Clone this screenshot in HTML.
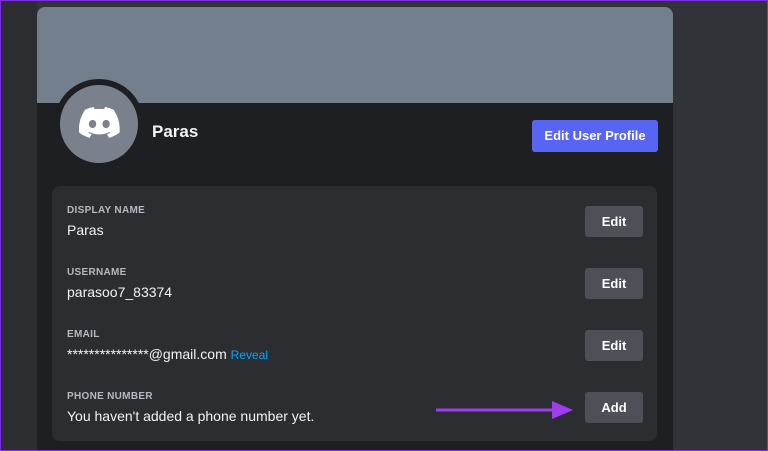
<!DOCTYPE html>
<html><head><style>
html,body{margin:0;width:768px;height:451px;overflow:hidden}
body{background:#313338;font-family:"Liberation Sans",sans-serif;position:relative}
.frame{position:absolute;left:0;top:0;width:766px;height:449px;border:1px solid #7b2fe0;}
.left{position:absolute;left:1px;top:1px;width:36px;height:449px;background:#2b2d31}
.card{position:absolute;left:37px;top:7px;width:636px;height:450px;background:#1e1f22;border-radius:8px 8px 0 0;overflow:hidden}
.banner{height:96px;background:#747f8d}
.avatar{position:absolute;left:17px;top:72px;width:78px;height:78px;border-radius:50%;background:#7a818c;border:6px solid #1e1f22}
.name{position:absolute;left:115px;top:115px;color:#f2f3f5;font-weight:bold;font-size:17px}
.eup{position:absolute;left:495px;top:113px;width:126px;height:32px;background:#5865f2;border-radius:3px;color:#fff;font-size:13px;font-weight:bold;text-align:center;line-height:32px}
.panel{position:absolute;left:15px;top:179px;width:605px;height:255px;background:#2b2d31;border-radius:8px}
.lab{position:absolute;left:15px;color:#b5bac1;font-size:10px;font-weight:bold;letter-spacing:.3px}
.val{position:absolute;left:15px;color:#f2f3f5;font-size:14px}
.btn{position:absolute;left:533px;width:58px;height:31px;background:#4e5058;border-radius:3px;color:#fff;font-size:13px;font-weight:bold;text-align:center;line-height:31px}
</style></head><body>
<div class="left"></div>
<div class="card">
<div class="banner"></div>
<div class="avatar"><svg width="78" height="78" viewBox="0 0 78 78"><g transform="translate(19,22) scale(0.32)" fill="#fff"><path d="M107.7 8.07A105.15 105.15 0 0 0 81.47 0a72.06 72.06 0 0 0-3.36 6.830 97.68 97.68 0 0 0-29.11 0A72.37 72.37 0 0 0 45.64 0a105.89 105.89 0 0 0-26.25 8.09C2.790 32.65-1.71 56.6.54 80.21a105.73 105.73 0 0 0 32.17 16.15 77.7 77.7 0 0 0 6.89-11.11 68.42 68.42 0 0 1-10.85-5.18c.91-.66 1.8-1.34 2.66-2a75.57 75.57 0 0 0 64.32 0c.87.71 1.76 1.39 2.66 2a68.68 68.68 0 0 1-10.87 5.19 77 77 0 0 0 6.89 11.1 105.25 105.25 0 0 0 32.19-16.14c2.64-27.38-4.51-51.11-18.9-72.15ZM42.45 65.69C36.18 65.69 31 60 31 53s5-12.74 11.43-12.74S54 46 53.89 53s-5.05 12.69-11.44 12.69Zm42.24 0C78.41 65.690 73.25 60 73.25 53s5-12.74 11.44-12.74S96.23 46 96.12 53s-5.04 12.69-11.43 12.69Z"/></g></svg></div>
<div class="name">Paras</div>
<div class="eup">Edit User Profile</div>
<div class="panel">
<div class="lab" style="top:19px">DISPLAY NAME</div><div class="val" style="top:36px">Paras</div><div class="btn" style="top:20px">Edit</div>
<div class="lab" style="top:81px">USERNAME</div><div class="val" style="top:98px">parasoo7_83374</div><div class="btn" style="top:82px">Edit</div>
<div class="lab" style="top:143px">EMAIL</div><div class="val" style="top:160px">***************@gmail.com <span style="color:#00a8fc;font-size:12px">Reveal</span></div><div class="btn" style="top:144px">Edit</div>
<div class="lab" style="top:205px">PHONE NUMBER</div><div class="val" style="top:222px">You haven't added a phone number yet.</div><div class="btn" style="top:206px">Add</div>
</div>
</div>
<svg style="position:absolute;left:435px;top:399px" width="140" height="22"><line x1="1" y1="11" x2="120" y2="11" stroke="#a03cf0" stroke-width="3"/><path d="M117 2 L138 11 L117 20 Z" fill="#a03cf0"/></svg>
<div class="frame"></div>
</body></html>
